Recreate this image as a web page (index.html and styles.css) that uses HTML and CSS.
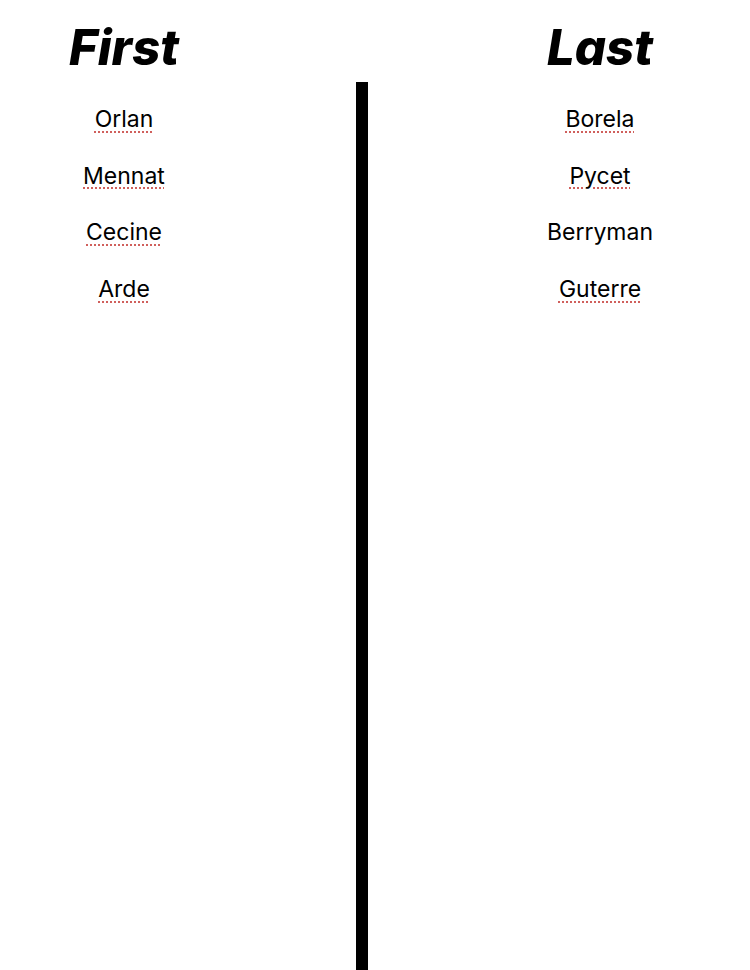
FILE: index.html
```html
<!DOCTYPE html>
<html>
<head>
<meta charset="utf-8">
<link rel="stylesheet" href="styles.css">
</head>
<body>
<div class="page">
  <div class="heads">
    <h1 class="head">First</h1>
    <div class="spacer"></div>
    <h1 class="head">Last</h1>
  </div>
  <div class="lists">
    <ul class="col">
      <li><span class="miss">Orlan</span></li>
      <li><span class="miss">Mennat</span></li>
      <li><span class="miss">Cecine</span></li>
      <li><span class="miss">Arde</span></li>
    </ul>
    <div class="divider"></div>
    <ul class="col">
      <li><span class="miss">Borela</span></li>
      <li><span class="miss">Pycet</span></li>
      <li>Berryman</li>
      <li><span class="miss">Guterre</span></li>
    </ul>
  </div>
</div>
</body>
</html>
```

FILE: styles.css
```css
html, body {
  margin: 0;
  padding: 0;
  background: #fff;
}
body {
  font-family: Inter, "Liberation Sans", sans-serif;
  color: #000;
}
.page {
  width: 724px;
  height: 970px;
  display: flex;
  flex-direction: column;
  overflow: hidden;
}
.heads {
  display: flex;
  height: 82px;
  align-items: center;
}
.head {
  margin: 0;
  width: 248px;
  text-align: center;
  font-size: 49px;
  font-weight: 800;
  font-style: italic;
  line-height: 1;
  padding-top: 12px;
}
.spacer {
  width: 228px;
}
.lists {
  flex: 1;
  display: flex;
  column-gap: 108px;
}
.col {
  list-style: none;
  margin: 0;
  padding: 9px 0 0;
  width: 248px;
}
.col li {
  text-align: center;
  font-size: 23px;
  line-height: 26.67px;
  padding: 15px 0;
}
.miss {
  text-decoration: underline dotted #d0605c;
  text-decoration-thickness: 2px;
  text-underline-offset: 4px;
}
.divider {
  width: 12px;
  background: #000;
}
```
